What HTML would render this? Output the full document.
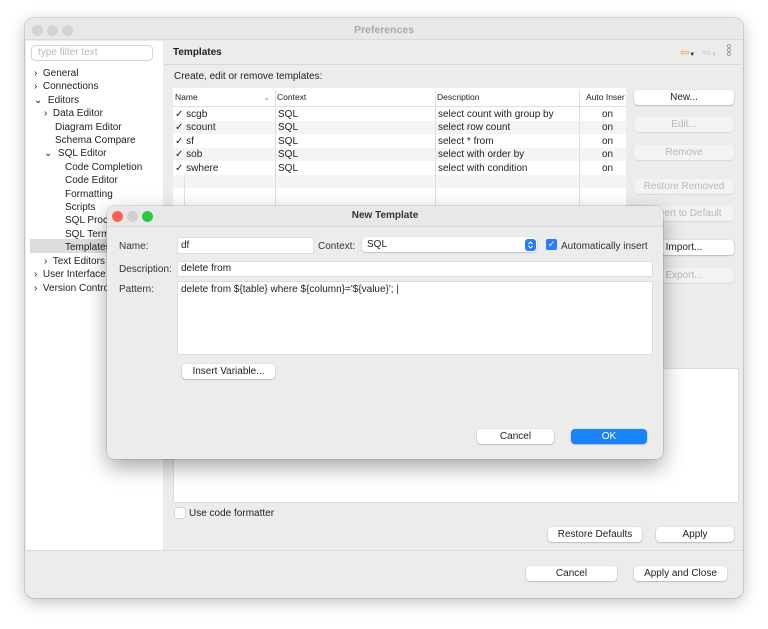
<!DOCTYPE html>
<html><head><meta charset="utf-8"><style>
*{box-sizing:border-box;margin:0;padding:0}
body{width:768px;height:629px;background:#fff;font-family:"Liberation Sans",sans-serif;font-size:10px;color:#222;position:relative;overflow:hidden}
.a{position:absolute;white-space:nowrap}
.win{position:absolute;left:25px;top:18px;width:718px;height:580px;background:#ececec;border-radius:9px;box-shadow:0 4px 16px rgba(0,0,0,.25),0 0 0 1px rgba(0,0,0,.12);overflow:hidden}
.btn{position:absolute;background:#fff;border-radius:4px;box-shadow:0 0.5px 1.5px rgba(0,0,0,.35);text-align:center;line-height:15px;height:15px;font-size:10px;color:#222}
.dis{background:#f3f3f3;color:#b8b8b8;box-shadow:0 0.5px 1px rgba(0,0,0,.15)}
.dot{position:absolute;width:11px;height:11px;border-radius:50%}
.row{position:absolute;left:173px;width:453px;height:13.4px}
.inp{position:absolute;background:#fff;box-shadow:0 0 0 .5px #ccc;padding-left:3px;line-height:15px}
</style></head><body>
<div class="win"></div>
<div class="a" style="left:26px;top:19px;width:716px;height:21px;border-bottom:1px solid #d8d8d8;background:#e8e8e8;border-radius:9px 9px 0 0"></div>
<div class="dot" style="left:32px;top:25px;background:#d3d3d3"></div>
<div class="dot" style="left:47px;top:25px;background:#d3d3d3"></div>
<div class="dot" style="left:62px;top:25px;background:#d3d3d3"></div>
<div class="a" style="left:0;width:768px;top:24px;text-align:center;font-weight:bold;color:#a8a8a8;font-size:10.5px">Preferences</div>
<div class="a" style="left:26px;top:41px;width:137px;height:509px;background:#fff"></div>
<div class="a" style="left:31px;top:45px;width:122px;height:16px;border:1px solid #d6d6d6;border-radius:4px;color:#b8b8b8;padding-left:6px;line-height:14px">type filter text</div>
<div class="a" style="left:30px;top:239px;width:133px;height:14px;background:#dcdcdc"></div>
<div class="a" style="left:34px;top:67px;line-height:13.4px;color:#222">
<div>›&nbsp; General</div><div>›&nbsp; Connections</div><div>⌄&nbsp; Editors</div>
<div style="padding-left:10px">›&nbsp; Data Editor</div><div style="padding-left:21px">Diagram Editor</div><div style="padding-left:21px">Schema Compare</div>
<div style="padding-left:10px">⌄&nbsp; SQL Editor</div>
<div style="padding-left:31px">Code Completion</div><div style="padding-left:31px">Code Editor</div><div style="padding-left:31px">Formatting</div><div style="padding-left:31px">Scripts</div><div style="padding-left:31px">SQL Processing</div><div style="padding-left:31px">SQL Terminal</div><div style="padding-left:31px">Templates</div>
<div style="padding-left:10px">›&nbsp; Text Editors</div><div>›&nbsp; User Interface</div><div>›&nbsp; Version Control</div>
</div>
<div class="a" style="left:164px;top:41px;width:578px;height:24px;border-bottom:1px solid #d8d8d8"></div>
<div class="a" style="left:173px;top:47px;font-weight:bold">Templates</div>
<div class="a" style="left:680px;top:46px;color:#e0a800;font-size:11px">⇦<span style="font-size:6px;color:#333">▼</span></div>
<div class="a" style="left:702px;top:46px;color:#ccc;font-size:11px">⇨<span style="font-size:6px">▼</span></div>
<div class="a" style="left:727px;top:45px;font-size:7px;line-height:4px;color:#777">o<br>o<br>o</div>
<div class="a" style="left:174px;top:71px">Create, edit or remove templates:</div>
<div class="a" style="left:173px;top:88px;width:453px;height:118px;background:#fff"></div>
<div class="a" style="left:173px;top:88px;width:453px;height:19px;border-bottom:1px solid #ddd;font-size:8.5px;line-height:19px">
<span class="a" style="left:2px">Name</span><span class="a" style="left:90px;color:#999">⌄</span>
<span class="a" style="left:104px">Context</span><span class="a" style="left:264px">Description</span><span class="a" style="left:413px">Auto Inser</span></div>
<div class="row" style="top:121px;background:#f4f4f4"></div>
<div class="row" style="top:148px;background:#f4f4f4"></div>
<div class="row" style="top:175px;background:#f4f4f4"></div>
<div class="a" style="left:275px;top:90px;width:1px;height:116px;background:#e0e0e0"></div>
<div class="a" style="left:435px;top:90px;width:1px;height:116px;background:#e0e0e0"></div>
<div class="a" style="left:579px;top:90px;width:1px;height:116px;background:#e0e0e0"></div>
<div class="a" style="left:184px;top:175px;width:1px;height:31px;background:#e0e0e0"></div>
<div class="a" style="left:175px;top:108px;line-height:13.4px">
<div>✓ scgb</div><div>✓ scount</div><div>✓ sf</div><div>✓ sob</div><div>✓ swhere</div></div>
<div class="a" style="left:278px;top:108px;line-height:13.4px"><div>SQL</div><div>SQL</div><div>SQL</div><div>SQL</div><div>SQL</div></div>
<div class="a" style="left:438px;top:108px;line-height:13.4px"><div>select count with group by</div><div>select row count</div><div>select * from</div><div>select with order by</div><div>select with condition</div></div>
<div class="a" style="left:602px;top:108px;line-height:13.4px"><div>on</div><div>on</div><div>on</div><div>on</div><div>on</div></div>
<div class="btn" style="left:634px;top:90px;width:100px">New...</div>
<div class="btn dis" style="left:634px;top:117px;width:100px">Edit...</div>
<div class="btn dis" style="left:634px;top:145px;width:100px">Remove</div>
<div class="btn dis" style="left:634px;top:179px;width:100px">Restore Removed</div>
<div class="btn dis" style="left:634px;top:206px;width:100px">Revert to Default</div>
<div class="btn" style="left:634px;top:240px;width:100px">Import...</div>
<div class="btn dis" style="left:634px;top:268px;width:100px">Export...</div>
<div class="a" style="left:173px;top:368px;width:566px;height:135px;background:#fff;border:1px solid #ddd"></div>
<div class="a" style="left:175px;top:508px;width:10px;height:10px;background:#fff;border-radius:2px;box-shadow:0 0 0 .5px #bbb"></div>
<div class="a" style="left:189px;top:508px">Use code formatter</div>
<div class="btn" style="left:548px;top:527px;width:94px">Restore Defaults</div>
<div class="btn" style="left:656px;top:527px;width:78px">Apply</div>
<div class="a" style="left:26px;top:550px;width:716px;height:1px;background:#dcdcdc"></div>
<div class="btn" style="left:526px;top:566px;width:91px">Cancel</div>
<div class="btn" style="left:634px;top:566px;width:93px">Apply and Close</div>
<div class="a" style="left:107px;top:206px;width:556px;height:253px;background:#ececec;border-radius:7px;box-shadow:0 8px 22px rgba(0,0,0,.35),0 0 0 .5px rgba(0,0,0,.2)"></div>
<div class="a" style="left:107px;top:206px;width:556px;height:21px;border-bottom:1px solid #d8d8d8;background:#e8e8e8;border-radius:7px 7px 0 0"></div>
<div class="dot" style="left:112px;top:211px;background:#fe5f57"></div>
<div class="dot" style="left:127px;top:211px;background:#d0d0d0"></div>
<div class="dot" style="left:142px;top:211px;background:#28c840"></div>
<div class="a" style="left:107px;width:556px;top:210px;text-align:center;font-weight:bold;color:#333">New Template</div>
<div class="a" style="left:119px;top:241px;color:#333">Name:</div>
<div class="inp" style="left:178px;top:238px;width:135px;height:15px">df</div>
<div class="a" style="left:318px;top:241px;color:#333">Context:</div>
<div class="inp" style="left:362px;top:237px;width:175px;height:15px;border-radius:4px;box-shadow:0 .5px 1.5px rgba(0,0,0,.3);padding-left:5px">SQL</div>
<svg class="a" style="left:525px;top:239px" width="11" height="12"><rect width="11" height="12" rx="3" fill="#2b7cf6"/><path d="M3.5 5 L5.5 3 L7.5 5 M3.5 7 L5.5 9 L7.5 7" stroke="#fff" stroke-width="1.1" fill="none"/></svg>
<div class="a" style="left:546px;top:239px;width:11px;height:11px;background:#2b7cf6;border-radius:2px;color:#fff;font-size:9px;line-height:11px;text-align:center">✓</div>
<div class="a" style="left:561px;top:241px;color:#333">Automatically insert</div>
<div class="a" style="left:119px;top:264px;color:#333">Description:</div>
<div class="inp" style="left:178px;top:262px;width:474px;height:14px;line-height:14px">delete from</div>
<div class="a" style="left:119px;top:284px;color:#333">Pattern:</div>
<div class="inp" style="left:178px;top:282px;width:474px;height:72px;line-height:16px">delete from ${table} where ${column}='${value}'; |</div>
<div class="btn" style="left:182px;top:364px;width:93px">Insert Variable...</div>
<div class="btn" style="left:477px;top:429px;width:77px">Cancel</div>
<div class="btn" style="left:571px;top:429px;width:76px;background:#1a82fb;color:#fff">OK</div>
</body></html>
